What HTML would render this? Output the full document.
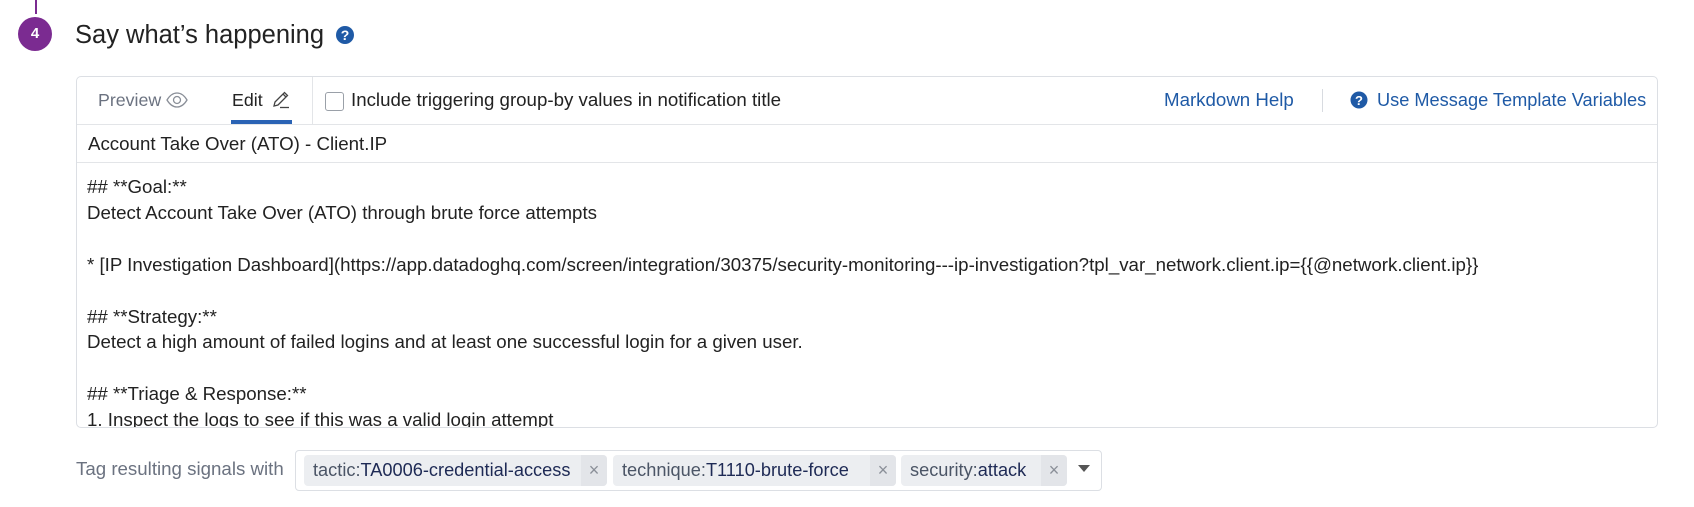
<!DOCTYPE html>
<html><head><meta charset="utf-8"><style>
*{margin:0;padding:0;box-sizing:border-box}
body{width:1694px;height:507px;background:#fff;font-family:"Liberation Sans",sans-serif;color:#1c2b3a;position:relative;overflow:hidden}
.a{position:absolute;white-space:nowrap}
.t{font-size:18.7px;line-height:26px}
.blue{color:#1f5aa6}
.chip{position:absolute;top:455px;height:31px;background:#eceef1;border-radius:4px;font-size:18.2px;line-height:31px;color:#4b5566;overflow:hidden}
.chip .k{padding-left:9px}
.chip b{font-weight:normal;color:#1e2a55}
.chip .x{position:absolute;right:0;top:0;width:26px;height:31px;background:#e3e5e9;text-align:center;color:#8a8f98;font-size:18px}
</style></head><body>
<div class="a" style="left:35px;top:0;width:2px;height:14px;background:#7b2b91"></div>
<div class="a" style="left:18px;top:17px;width:34px;height:34px;border-radius:50%;background:#7b2b91;color:#fff;font-size:15px;font-weight:bold;text-align:center;line-height:34px">4</div>
<div class="a" style="left:75px;top:19px;font-size:25.5px;line-height:32px;color:#222">Say what’s happening</div>
<svg class="a" style="left:335px;top:25px" width="20" height="20" viewBox="0 0 20 20"><circle cx="10" cy="10" r="9" fill="#1f5aa6"/><text x="10" y="15" font-size="14" font-weight="bold" fill="#fff" text-anchor="middle" font-family="Liberation Sans">?</text></svg>

<div class="a" style="left:76px;top:76px;width:1582px;height:352px;border:1px solid #dcdfe4;border-radius:5px"></div>
<div class="a" style="left:77px;top:124px;width:1580px;height:1px;background:#e3e5e8"></div>
<div class="a" style="left:77px;top:162px;width:1580px;height:1px;background:#e3e5e8"></div>
<div class="a" style="left:312px;top:77px;width:1px;height:47px;background:#e3e5e8"></div>

<div class="a t" style="left:98px;top:87px;color:#6b7280;font-size:17.8px">Preview</div>
<svg class="a" style="left:166px;top:92px" width="22" height="16" viewBox="0 0 22 16"><path d="M1 8C4 3 7.5 1 11 1s7 2 10 7c-3 5-6.5 7-10 7S4 13 1 8z" fill="none" stroke="#8a8f98" stroke-width="1.3"/><circle cx="11" cy="8" r="3.5" fill="none" stroke="#8a8f98" stroke-width="1.3"/></svg>
<div class="a t" style="left:232px;top:87px;color:#222;font-size:17.8px">Edit</div>
<svg class="a" style="left:271px;top:90px" width="20" height="20" viewBox="0 0 20 20"><path d="M3 16l1-4L13.5 2.5l3 3L7 15zM12 4l3 3" fill="none" stroke="#444" stroke-width="1.3"/><path d="M9 17.5h9" stroke="#444" stroke-width="1.3"/></svg>
<div class="a" style="left:231px;top:120px;width:61px;height:4px;background:#2a63b5"></div>
<div class="a" style="left:325px;top:92px;width:19px;height:19px;border:1.5px solid #9aa0a8;border-radius:3px"></div>
<div class="a t" style="left:351px;top:87px;color:#222">Include triggering group-by values in notification title</div>

<div class="a t blue" style="left:1164px;top:87px">Markdown Help</div>
<div class="a" style="left:1322px;top:89px;width:1px;height:23px;background:#d8dbe0"></div>
<svg class="a" style="left:1350px;top:91px" width="18" height="18" viewBox="0 0 18 18"><circle cx="9" cy="9" r="8.5" fill="#1f5aa6"/><text x="9" y="14" font-size="13" font-weight="bold" fill="#fff" text-anchor="middle" font-family="Liberation Sans">?</text></svg>
<div class="a t blue" style="left:1377px;top:87px;font-size:18.2px">Use Message Template Variables</div>

<div class="a t" style="left:88px;top:131px;color:#222">Account Take Over (ATO) - Client.IP</div>

<div class="a t" style="left:87px;top:174px;color:#222;line-height:25.9px;height:253px;overflow:hidden">## **Goal:**<br>Detect Account Take Over (ATO) through brute force attempts<br><br>* [IP Investigation Dashboard](https://app.datadoghq.com/screen/integration/30375/security-monitoring---ip-investigation?tpl_var_network.client.ip={{@network.client.ip}}<br><br>## **Strategy:**<br>Detect a high amount of failed logins and at least one successful login for a given user.<br><br>## **Triage &amp; Response:**<br>1. Inspect the logs to see if this was a valid login attempt</div>

<div class="a t" style="left:76px;top:456px;color:#6b7280">Tag resulting signals with</div>
<div class="a" style="left:295px;top:450px;width:807px;height:41px;border:1px solid #dcdfe4;border-radius:4px"></div>
<div class="chip" style="left:304px;width:303px"><span class="k">tactic:<b>TA0006-credential-access</b></span><span class="x">×</span></div>
<div class="chip" style="left:613px;width:283px"><span class="k">technique:<b>T1110-brute-force</b></span><span class="x">×</span></div>
<div class="chip" style="left:901px;width:166px"><span class="k">security:<b>attack</b></span><span class="x">×</span></div>
<svg class="a" style="left:1078px;top:465px" width="12" height="8" viewBox="0 0 12 8"><path d="M0 0h12L6 7z" fill="#555"/></svg>
</body></html>
